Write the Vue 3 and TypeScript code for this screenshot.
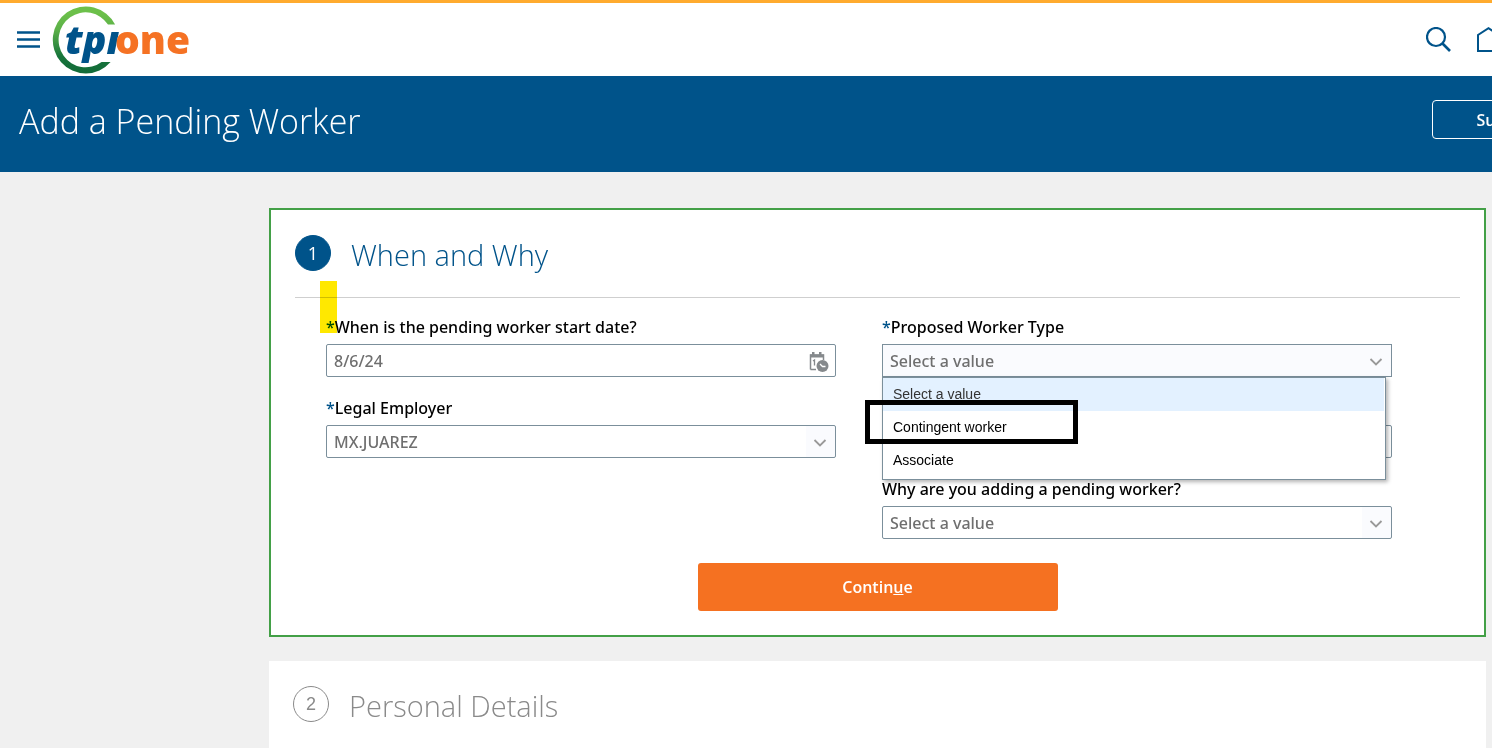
<script setup lang="ts">
import { ref } from 'vue'

const startDate = ref('8/6/24')
const employer = ref('MX.JUAREZ')
const workerType = ref('Select a value')
const reason = ref('Select a value')
const unit = ref('')
const workerTypes: string[] = ['Select a value', 'Contingent worker', 'Associate']
</script>

<template>
  <div class="page">
    <header class="topbar">
      <button class="icon-button menu" type="button" aria-label="Menu">
        <svg width="23" height="18" viewBox="0 0 23 18" stroke="#00538a" stroke-width="2.6">
          <path d="M0 1.5H23M0 8.5H23M0 15.5H23" />
        </svg>
      </button>
      <a class="logo" href="#" aria-label="tpi one">
        <svg width="140" height="70" viewBox="0 0 140 70">
          <defs>
            <linearGradient id="ring" x1="0" y1="0" x2="0" y2="1">
              <stop offset="0.1" stop-color="#6cc04a" />
              <stop offset="0.35" stop-color="#5bb048" />
              <stop offset="0.75" stop-color="#17743b" />
              <stop offset="1" stop-color="#126b38" />
            </linearGradient>
          </defs>
          <path
            d="M63.100 19.500A33 33.500 0 1 0 58.600 57L49.600 57A27 27.500 0 1 1 56 19.500Z"
            fill="url(#ring)"
          />
          <text class="logo-tpi" x="13" y="49">tpı</text>
          <text class="logo-one" x="63" y="49">one</text>
        </svg>
      </a>
      <div class="tools">
        <button class="icon-button" type="button" aria-label="Search">
          <svg width="26" height="26" viewBox="0 0 26 26" fill="none" stroke="#00538a" stroke-width="2.2">
            <circle cx="10" cy="10" r="9" />
            <path d="M16.500 16.500L24 24" stroke-width="2.600" />
          </svg>
        </button>
        <button class="icon-button" type="button" aria-label="Home">
          <svg width="26" height="26" viewBox="0 0 26 26" fill="none" stroke="#00538a" stroke-width="2">
            <path d="M1 24V8L11.500 1.200L22 8V24Z" />
          </svg>
        </button>
      </div>
    </header>

    <div class="banner">
      <h1>Add a Pending Worker</h1>
      <button class="submit" type="button">Submit</button>
    </div>

    <main>
      <section class="card active">
        <div class="card-head">
          <span class="badge">1</span>
          <h2>When and Why</h2>
        </div>
        <form @submit.prevent>
          <div class="fields">
            <div class="field date">
              <label for="start"><span class="star">*</span>When is the pending worker start date?</label>
              <div class="control">
                <input id="start" v-model="startDate" type="text" />
                <svg class="calendar" width="20" height="20" viewBox="0 0 20 20">
                  <path d="M1.500 17.500V3H14.500V8M1.500 17.500H7" fill="none" stroke="#85898c" stroke-width="1.500" />
                  <path d="M1 2.500H15V5.500H1ZM3 0H5.500V3H3ZM10 0H12.500V3H10Z" fill="#85898c" />
                  <path d="M4 9L5.500 8V13.500" fill="none" stroke="#85898c" stroke-width="1.300" />
                  <circle cx="13.500" cy="14" r="6" fill="#85898c" />
                  <path d="M11 12L13.500 14.500H16.500" fill="none" stroke="#fff" stroke-width="1.300" />
                </svg>
              </div>
              <span class="marker"></span>
            </div>

            <div class="field">
              <label for="type"><span class="star">*</span>Proposed Worker Type</label>
              <div class="control open">
                <select id="type" v-model="workerType">
                  <option v-for="t in workerTypes" :key="t">{{ t }}</option>
                </select>
                <svg class="chevron" width="14" height="10" viewBox="0 0 14 10"><path d="M1.500 2L7 7.500L12.500 2" /></svg>
                <ul class="menu-list" role="listbox" aria-label="Proposed Worker Type">
                  <li
                    v-for="(t, i) in workerTypes"
                    :key="t"
                    role="option"
                    :aria-selected="t === workerType"
                    :class="{ current: t === workerType, boxed: i === 1 }"
                  >{{ t }}</li>
                </ul>
              </div>
            </div>

            <div class="field">
              <label for="employer"><span class="star">*</span>Legal Employer</label>
              <div class="control">
                <select id="employer" v-model="employer">
                  <option>MX.JUAREZ</option>
                </select>
                <svg class="chevron" width="14" height="10" viewBox="0 0 14 10"><path d="M1.500 2L7 7.500L12.500 2" /></svg>
              </div>
            </div>

            <div class="field">
              <div class="control">
                <input v-model="unit" type="text" aria-label="Additional detail" />
              </div>
            </div>

            <div class="field right">
              <label for="reason">Why are you adding a pending worker?</label>
              <div class="control">
                <select id="reason" v-model="reason">
                  <option>Select a value</option>
                </select>
                <svg class="chevron" width="14" height="10" viewBox="0 0 14 10"><path d="M1.500 2L7 7.500L12.500 2" /></svg>
              </div>
            </div>
          </div>
          <button class="continue" type="submit">Contin<u>u</u>e</button>
        </form>
      </section>

      <section class="card">
        <div class="card-head">
          <span class="badge">2</span>
          <h2>Personal Details</h2>
        </div>
      </section>
    </main>
  </div>
</template>

<style>
body {
  margin: 0;
  background: #f0f0f0;
}
</style>

<style scoped>
*,
*::after {
  box-sizing: border-box;
}
.page {
  min-height: 100vh;
  display: flex;
  flex-direction: column;
  overflow: hidden;
  background: #f0f0f0;
  font-family: "Noto Sans", "Open Sans", sans-serif;
  font-size: 16px;
  color: #000;
}
.topbar {
  display: flex;
  align-items: center;
  height: 76px;
  padding-left: 17px;
  border-top: 3px solid #ffab2e;
  background: #fff;
}
.icon-button {
  display: block;
  padding: 0;
  border: 0;
  background: none;
}
.icon-button svg,
.logo svg {
  display: block;
}
.logo {
  margin-left: 12px;
}
.logo-tpi,
.logo-one {
  font-family: "Open Sans", sans-serif;
  font-size: 39px;
  font-weight: 800;
}
.logo-tpi {
  font-style: italic;
  fill: #00538a;
}
.logo-one {
  fill: #f57224;
}
.tools {
  display: flex;
  gap: 25px;
  margin-left: auto;
  margin-right: -11px;
}
.banner {
  display: flex;
  justify-content: space-between;
  align-items: flex-start;
  height: 96px;
  padding: 24px 0 0 19px;
  background: #00538a;
  color: #fff;
}
h1,
h2 {
  margin: 0;
  font-family: "Open Sans", sans-serif;
  font-weight: 300;
}
h1 {
  font-size: 34px;
  line-height: 42px;
}
.submit {
  width: 144px;
  height: 39px;
  margin-right: -84px;
  padding: 0;
  border: 1px solid #fff;
  border-radius: 4px;
  background: transparent;
  color: #fff;
  font: 600 16px "Open Sans", sans-serif;
}
main {
  flex: 1;
  display: flex;
  flex-direction: column;
  gap: 24px;
  padding: 36px 6px 0 269px;
}
.card {
  padding: 0 24px;
  background: #fff;
  color: #8a8a8a;
}
.card:last-child {
  flex: 1;
}
.card.active {
  padding-bottom: 24px;
  border: 2px solid #43a047;
  color: #000;
}
.card-head {
  display: flex;
  align-items: center;
  gap: 20px;
  padding: 25px 0 26px;
}
.active .card-head {
  border-bottom: 1px solid #cfcfcf;
}
.badge {
  display: grid;
  place-items: center;
  width: 36px;
  height: 36px;
  border: 1px solid #8a8a8a;
  border-radius: 50%;
  font-family: "Liberation Sans", sans-serif;
  font-size: 18px;
}
.active .badge {
  border-color: #00538a;
  background: #00538a;
  color: #fff;
  font-family: "Open Sans", sans-serif;
}
h2 {
  padding-top: 4px;
  font-size: 29px;
  line-height: 32px;
}
.active h2 {
  color: #00538a;
}
form {
  display: flex;
  flex-direction: column;
  gap: 24px;
  padding-top: 17px;
}
.fields {
  display: grid;
  grid-template-columns: 1fr 1fr;
  gap: 19px 46px;
  padding: 0 68px 0 31px;
}
.field {
  position: relative;
  display: flex;
  flex-direction: column;
  justify-content: flex-end;
  gap: 5px;
}
.right {
  grid-column: 2;
}
label {
  line-height: 24px;
  font-weight: 500;
  white-space: nowrap;
}
.star {
  color: #00538a;
}
.control {
  position: relative;
  height: 33px;
}
input,
select {
  display: block;
  width: 100%;
  height: 100%;
  padding: 0 7px;
  border: 1px solid #7b8f9b;
  border-radius: 2px;
  background: #fff;
  color: #6f6f6f;
  font: 500 16px "Noto Sans", "Open Sans", sans-serif;
  appearance: none;
}
select {
  background: linear-gradient(to left, #fafbfe 29px, #fff 29px);
}
.open select {
  border-radius: 0;
  background: #fafbfe;
}
.chevron {
  position: absolute;
  right: 9px;
  top: 13px;
  fill: none;
  stroke: #999;
  stroke-width: 1.8;
}
.calendar {
  position: absolute;
  right: 7px;
  top: 8px;
}
.marker {
  position: absolute;
  left: -6px;
  top: -34px;
  width: 17px;
  height: 52px;
  background: #ffe800;
  mix-blend-mode: multiply;
}
.menu-list {
  position: absolute;
  z-index: 2;
  top: 33px;
  left: 0;
  right: 6px;
  margin: 0;
  padding: 0 1px 2px 0;
  border: 1px solid #7b8f9b;
  background: #fff;
  box-shadow: 2px 2px 4px rgba(0, 0, 0, 0.3);
  list-style: none;
  font: 14px/33px "Liberation Sans", sans-serif;
}
.menu-list li {
  position: relative;
  padding-left: 10px;
}
.menu-list .current {
  background: #e3f1ff;
  color: #333;
}
.boxed::after {
  content: "";
  position: absolute;
  left: -18px;
  top: -11px;
  width: 213px;
  height: 44px;
  border: 5px solid #000;
}
.continue {
  align-self: center;
  width: 360px;
  height: 48px;
  border: 0;
  border-radius: 3px;
  background: #f57121;
  color: #fff;
  font: 600 16px "Open Sans", sans-serif;
}
</style>
